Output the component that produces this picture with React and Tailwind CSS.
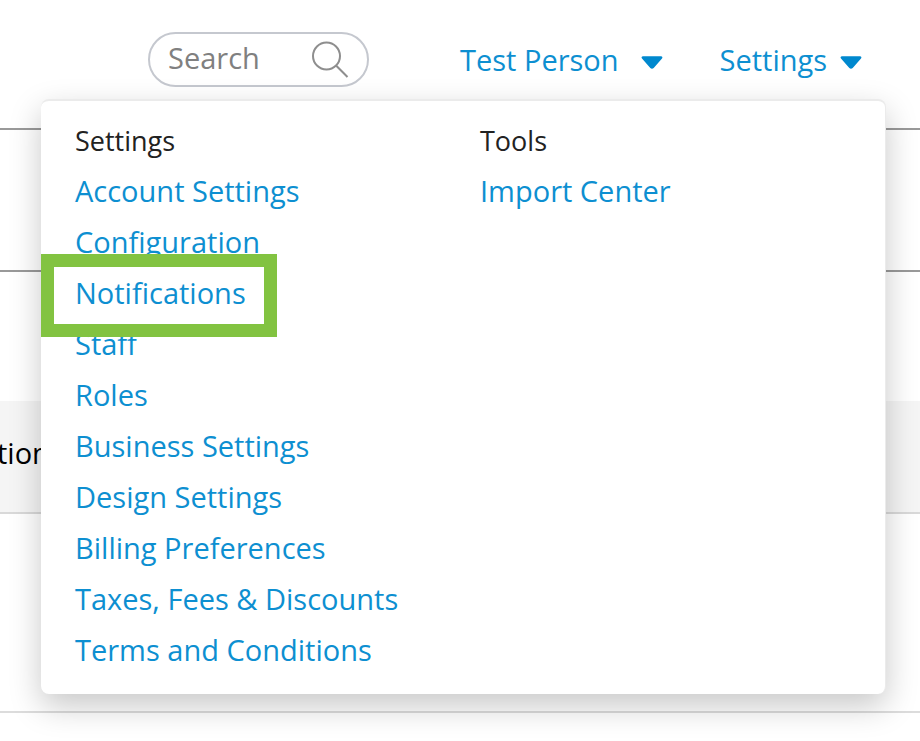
const settingsLinks = [
  "Account Settings",
  "Configuration",
  "Notifications",
  "Staff",
  "Roles",
  "Business Settings",
  "Design Settings",
  "Billing Preferences",
  "Taxes, Fees & Discounts",
  "Terms and Conditions",
];

const toolLinks = ["Import Center"];

function Caret() {
  return (
    <svg className="w-[22px] h-[14px] mt-1" viewBox="0 0 22 14" fill="#0088ce" aria-hidden="true">
      <path d="M2 1.300h18c1.300 0 1.900 1.200 1 2.200l-8.300 9.400c-1 1.100-2.400 1.100-3.400 0L1 3.500C.1 2.500.7 1.300 2 1.300z" />
    </svg>
  );
}

function SearchBox() {
  return (
    <label className="w-[221px] h-[55px] flex items-center border-2 border-[#c5c8cf] rounded-full bg-white px-[18px]">
      <input
        type="text"
        aria-label="Search"
        placeholder="Search"
        className="flex-1 min-w-0 pb-1 text-[29px] leading-[40px] outline-none placeholder:text-[#808080]"
      />
      <svg className="w-[38px] h-[38px] shrink-0" viewBox="0 0 38 38" fill="none" stroke="#8e8e8e" strokeWidth="2" aria-hidden="true">
        <circle cx="15.500" cy="15" r="13.500" />
        <path d="M25.300 24.800L36.500 36" />
      </svg>
    </label>
  );
}

function MenuColumn({ title, links, active }) {
  return (
    <section>
      <h2 className="text-[27px] leading-[48px] text-[#222]">{title}</h2>
      <ul>
        {links.map((name) => (
          <li key={name} className="h-[51px] flex items-center">
            <a href="#" className="relative text-[29px] leading-[51px] text-[#0d8fd1] whitespace-nowrap">
              {name}
              {name === active && (
                <span className="absolute z-10 -top-[13px] -bottom-[19px] -left-[34px] -right-[31px] border-[13px] border-[#82c341]" />
              )}
            </a>
          </li>
        ))}
      </ul>
    </section>
  );
}

export default function App() {
  return (
    <div className="relative min-h-screen overflow-hidden bg-white font-['Open_Sans',sans-serif]">
      <header className="h-[130px] flex items-start pt-8 pl-[148px] border-b-2 border-[#999]">
        <SearchBox />
        <nav className="flex ml-[91px] h-[55px] text-[29px] text-[#0d8fd1] whitespace-nowrap">
          <button className="flex items-center gap-[22px] mr-[57px]">
            Test Person <Caret />
          </button>
          <button className="flex items-center gap-[13px]">
            Settings <Caret />
          </button>
        </nav>
      </header>

      <main>
        <div className="h-[142px] border-b-2 border-[#999]" />
        <div className="h-[129px]" />
        <div className="h-[113px] flex items-center bg-[#f5f5f5] border-b-2 border-[#d9d9d9] text-[29px] text-black">
          <span className="-ml-[3px] pb-2">tion</span>
        </div>
        <div className="h-[199px] border-b-2 border-[#dcdcdc]" />
      </main>

      <div className="absolute top-[99px] left-[41px] right-[34px] grid grid-cols-[405px_1fr] pt-4 px-[34px] pb-[19px] bg-white border-t-2 border-r border-[#ebebeb] rounded-lg shadow-[0_12px_32px_rgba(0,0,0,0.22)]">
        <MenuColumn title="Settings" links={settingsLinks} active="Notifications" />
        <MenuColumn title="Tools" links={toolLinks} />
      </div>
    </div>
  );
}
